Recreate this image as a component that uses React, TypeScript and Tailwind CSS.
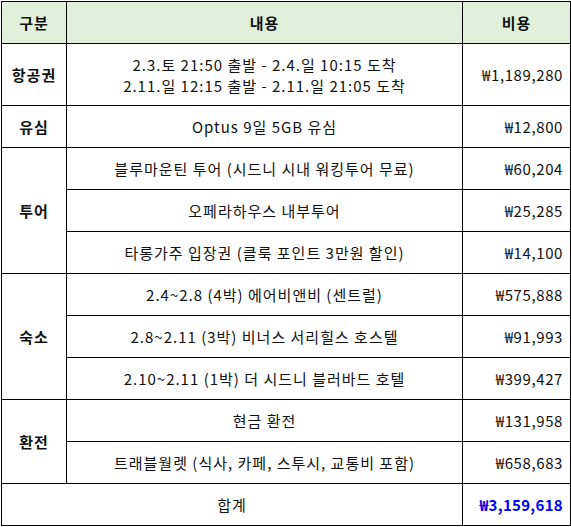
import React from "react";

type Row = { cat?: string; span?: number; desc: React.ReactNode; cost: string; h?: string };

const rows: Row[] = [
  {
    cat: "항공권",
    span: 1,
    desc: (
      <>
        2.3.토 21:50 출발 - 2.4.일 10:15 도착
        <br />
        2.11.일 12:15 출발 - 2.11.일 21:05 도착
      </>
    ),
    cost: "₩1,189,280",
    h: "h-[62px]",
  },
  { cat: "유심", span: 1, desc: "Optus 9일 5GB 유심", cost: "₩12,800" },
  { cat: "투어", span: 3, desc: "블루마운틴 투어 (시드니 시내 워킹투어 무료)", cost: "₩60,204" },
  { desc: "오페라하우스 내부투어", cost: "₩25,285" },
  { desc: "타롱가주 입장권 (클룩 포인트 3만원 할인)", cost: "₩14,100" },
  { cat: "숙소", span: 3, desc: "2.4~2.8 (4박) 에어비앤비 (센트럴)", cost: "₩575,888" },
  { desc: "2.8~2.11 (3박) 비너스 서리힐스 호스텔", cost: "₩91,993" },
  { desc: "2.10~2.11 (1박) 더 시드니 블러바드 호텔", cost: "₩399,427" },
  { cat: "환전", span: 2, desc: "현금 환전", cost: "₩131,958" },
  { desc: "트래블월렛 (식사, 카페, 스투시, 교통비 포함)", cost: "₩658,683" },
];

export default function App() {
  return (
    <div className="bg-white w-[571px] h-[527px] pt-px pl-px text-[15px] leading-[21px] text-[#111] [font-family:'Malgun_Gothic','Noto_Sans_CJK_KR',sans-serif]">
      <table className="border-collapse table-fixed w-[570px]">
        <colgroup>
          <col className="w-[65px]" />
          <col className="w-[396px]" />
          <col className="w-[108px]" />
        </colgroup>
        <thead>
          <tr className="h-[42px] bg-[#e2efda] font-bold tracking-[1px]">
            <th className="border border-black text-center">구분</th>
            <th className="border border-black text-center">내용</th>
            <th className="border border-black text-center">비용</th>
          </tr>
        </thead>
        <tbody>
          {rows.map((r, i) => (
            <tr key={i} className={r.h ?? "h-[42px]"}>
              {r.cat && (
                <td rowSpan={r.span} className="border border-black text-center font-bold tracking-[1px]">
                  {r.cat}
                </td>
              )}
              <td className="border border-black text-center tracking-[1px]">{r.desc}</td>
              <td className="border border-black text-right pr-[7px] tracking-[0.6px]">{r.cost}</td>
            </tr>
          ))}
          <tr className="h-[42px]">
            <td colSpan={2} className="border border-black text-center tracking-[1px]">
              합계
            </td>
            <td className="border border-black text-right pr-[7px] font-bold tracking-[0.3px] text-[#0000ee]">
              ₩3,159,618
            </td>
          </tr>
        </tbody>
      </table>
    </div>
  );
}
